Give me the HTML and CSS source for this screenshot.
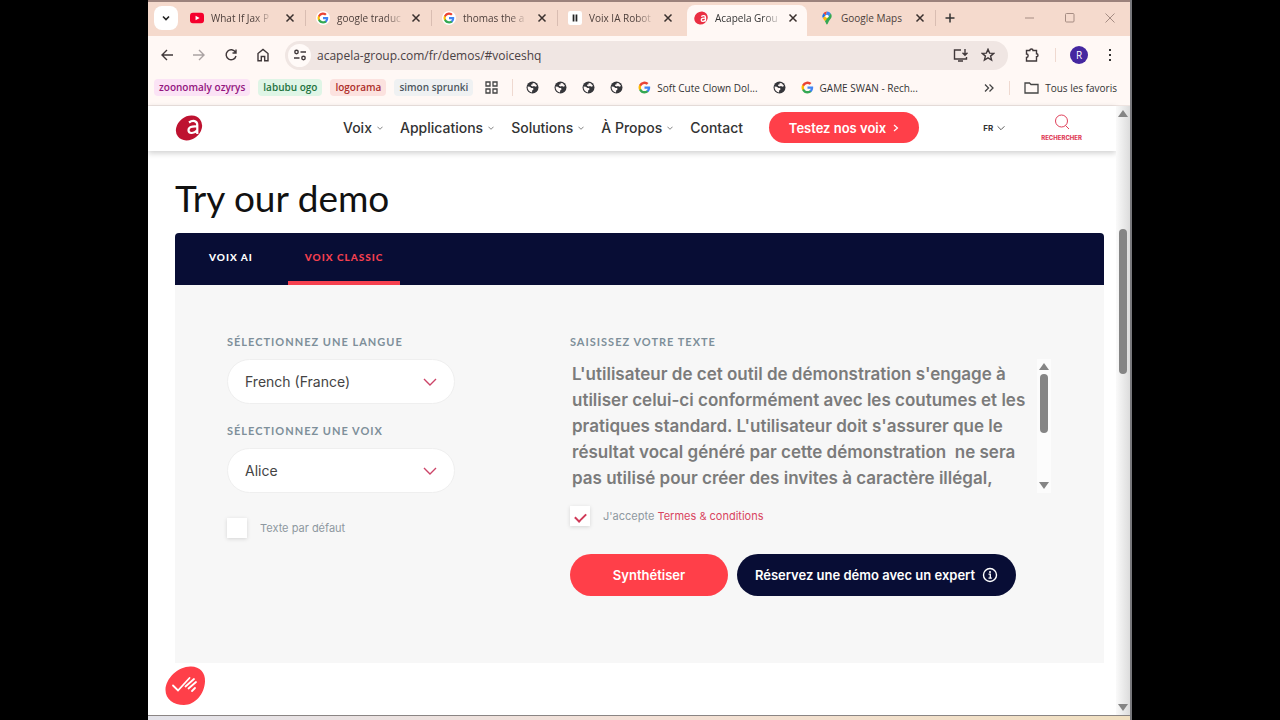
FILE: index.html
```html
<!DOCTYPE html>
<html lang="fr">
<head>
  <meta charset="UTF-8" />
  <meta name="viewport" content="width=device-width, initial-scale=1.0"/>
  <title>Acapela Group - Try our demo</title>
  <link rel="stylesheet" href="styles.css">
</head>
<body>
  <svg class="defs" width="0" height="0" aria-hidden="true">
    <symbol id="google" viewBox="0 0 24 24">
      <path fill="#4285f4" d="M22.5 12.2c0-.8-.1-1.5-.2-2.2H12v4.300h5.900c-.3 1.400-1 2.500-2.200 3.300v2.800h3.600c2.100-1.900 3.200-4.800 3.200-8.200z"/>
      <path fill="#34a853" d="M12 23c3 0 5.500-1 7.300-2.700l-3.600-2.800c-1 .7-2.200 1.100-3.700 1.100-2.900 0-5.300-1.900-6.200-4.500H2.200v2.800C4 20.500 7.700 23 12 23z"/>
      <path fill="#fbbc05" d="M5.800 14.100a6.600 6.600 0 0 1 0-4.200V7.100H2.200a11 11 0 0 0 0 9.800z"/>
      <path fill="#ea4335" d="M12 5.400c1.600 0 3.100.6 4.200 1.600l3.200-3.200A11 11 0 0 0 2.200 7.100l3.600 2.800C6.700 7.300 9.100 5.400 12 5.400z"/>
    </symbol>
    <symbol id="close" viewBox="0 0 10 10">
      <path d="M1.500 1.500l7 7M8.500 1.500l-7 7" fill="none" stroke="currentColor" stroke-width="1.500"/>
    </symbol>
    <symbol id="globe" viewBox="0 0 24 24">
      <circle cx="12" cy="12" r="11" fill="#35363a"/>
      <path fill="#fff8f6" d="M3 10l4 .500 3 2.500h3l1 2-2.500 2.500-.5 3.500C6 20 2.500 16 3 10zM12 3.500l4 .500 4.500 5-3.500 1.500-2-1.500-3 1-3-1.500 1-2 2.500-.5z"/>
    </symbol>
    <symbol id="chevron" viewBox="0 0 14 14">
      <path d="M1 4l6 6 6-6" fill="none" stroke="currentColor" stroke-width="1.400"/>
    </symbol>
  </svg>

  <div class="window">
    <div class="tabstrip">
      <button class="tab-list" aria-label="Rechercher dans les onglets"><svg width="10" height="10" viewBox="0 0 10 10"><path d="M2 3.500l3 3 3-3" fill="none" stroke="#222" stroke-width="1.600"/></svg></button>
      <div class="tab">
        <svg class="favicon" viewBox="0 0 24 24"><rect x="0" y="3" width="24" height="18" rx="5" fill="#f5002d"/><path d="M9.500 8l7 4-7 4z" fill="#fff"/></svg>
        <span class="tab-title fade">What If Jax P</span>
        <button class="tab-close" aria-label="Fermer"><svg><use href="#close"/></svg></button>
      </div>
      <div class="tab">
        <svg class="favicon disc"><use href="#google"/></svg>
        <span class="tab-title fade">google traduc</span>
        <button class="tab-close" aria-label="Fermer"><svg><use href="#close"/></svg></button>
      </div>
      <div class="tab">
        <svg class="favicon disc"><use href="#google"/></svg>
        <span class="tab-title fade">thomas the a</span>
        <button class="tab-close" aria-label="Fermer"><svg><use href="#close"/></svg></button>
      </div>
      <div class="tab before-active">
        <svg class="favicon" viewBox="0 0 24 24"><rect width="24" height="24" rx="4" fill="#fff"/><path d="M8 6h3v12H8zM13 6h3v12h-3z" fill="#222"/></svg>
        <span class="tab-title fade">Voix IA Robot</span>
        <button class="tab-close" aria-label="Fermer"><svg><use href="#close"/></svg></button>
      </div>
      <div class="tab active">
        <svg class="favicon" viewBox="0 0 28 28"><ellipse cx="14" cy="14" rx="14" ry="12.500" transform="rotate(-38 14 14)" fill="#ea2e42"/><path d="M14.500 11c4-3 8.500-2 8.500 2v8M23 14.500c-5-.5-8.500.5-8.500 3.500s5 4 8.500 0" fill="none" stroke="#fff" stroke-width="2.600"/></svg>
        <span class="tab-title fade">Acapela Grou</span>
        <button class="tab-close" aria-label="Fermer"><svg><use href="#close"/></svg></button>
      </div>
      <div class="tab">
        <svg class="favicon" viewBox="0 0 24 24"><path d="M12 1a8 8 0 0 0-6.200 3l4 3.400z" fill="#ea4335"/><path d="M5.800 4A8 8 0 0 0 5 12.500L9.800 7.400z" fill="#1a73e8"/><path d="M12 1a8 8 0 0 1 6.500 3.300L14.400 11 9.800 7.400z" fill="#4285f4"/><path d="M5 12.500c1 2 2.500 3 3.500 5l6-6.800-4.700-3.300z" fill="#fbbc04"/><path d="M18.500 4.300c3.500 5.200.2 9-2.500 12-2 2.300-2.500 6.700-4 6.700s-1.500-2.500-3.500-5.500z" fill="#34a853"/><circle cx="12" cy="9" r="2.700" fill="#fff"/></svg>
        <span class="tab-title">Google Maps</span>
        <button class="tab-close" aria-label="Fermer"><svg><use href="#close"/></svg></button>
      </div>
      <button class="new-tab" aria-label="Nouvel onglet"><svg width="10" height="10" viewBox="0 0 10 10"><path d="M5 .5v9M.5 5h9" stroke="#333" stroke-width="1.500"/></svg></button>
      <div class="window-controls">
        <button aria-label="Réduire"><svg width="10" height="10" viewBox="0 0 10 10"><path d="M0 5h9" stroke="currentColor"/></svg></button>
        <button aria-label="Agrandir"><svg width="10" height="10" viewBox="0 0 10 10"><rect x=".5" y=".5" width="8.500" height="8.500" rx="1" fill="none" stroke="currentColor"/></svg></button>
        <button aria-label="Fermer la fenêtre"><svg width="10" height="10" viewBox="0 0 10 10"><path d="M.5.500l9 9M9.500.500l-9 9" stroke="currentColor"/></svg></button>
      </div>
    </div>

    <div class="toolbar">
      <button aria-label="Retour"><svg viewBox="0 0 14 14"><path d="M7 2L2 7l5 5M2 7h11"/></svg></button>
      <button class="off" aria-label="Avancer"><svg viewBox="0 0 14 14"><path d="M7 2l5 5-5 5M12 7H1"/></svg></button>
      <button aria-label="Actualiser"><svg viewBox="0 0 14 14"><path d="M11.500 4.300A5 5 0 1 0 12 8M12 1.500v3.500H8.500"/></svg></button>
      <button aria-label="Accueil"><svg viewBox="0 0 14 14"><path d="M2 5.500L7 1.500l5 4v7.300H8.700V8.500H5.300v4.300H2z"/></svg></button>
      <div class="omnibox">
        <button class="site-info" aria-label="Informations sur le site"><svg viewBox="0 0 14 14"><path d="M7.500 4H13M1 10h5.500"/><circle cx="3.500" cy="4" r="1.700"/><circle cx="10.500" cy="10" r="1.700"/></svg></button>
        <input type="text" aria-label="Adresse" value="acapela-group.com/fr/demos/#voiceshq">
        <button aria-label="Installer"><svg class="wide" viewBox="0 0 16 14"><path d="M8 2H1.500v9h12V9M5 13h5M12 1v6M9.500 4.800L12 7.200l2.500-2.400"/></svg></button>
        <button aria-label="Ajouter aux favoris"><svg viewBox="0 0 14 14"><path d="M7 1.300l1.600 3.800 4.100.3-3.100 2.700 1 4L7 9.900l-3.600 2.200 1-4L1.300 5.400l4.100-.3z"/></svg></button>
      </div>
      <button class="extensions" aria-label="Extensions"><svg class="wide" viewBox="0 0 16 14"><path d="M2.500 2.500h3.300c0-2 3.200-2 3.200 0h3.500v3.200c2 0 2 3 0 3V13h-10V9.500c2.200 0 2.200-3.500 0-3.500z"/></svg></button>
      <button class="avatar" aria-label="Profil">R</button>
      <button aria-label="Menu"><svg viewBox="0 0 14 14"><path class="dots" d="M6 1h2v2H6zM6 6h2v2H6zM6 11h2v2H6z"/></svg></button>
    </div>

    <div class="bookmarks">
      <a href="#" class="group pink">zoonomaly ozyrys</a>
      <a href="#" class="group green">labubu ogo</a>
      <a href="#" class="group red">logorama</a>
      <a href="#" class="group grey">simon sprunki</a>
      <a href="#" class="apps" aria-label="Applications"><svg width="13" height="13" viewBox="0 0 13 13"><path d="M1 1h4v4H1zM8 1h4v4H8zM1 8h4v4H1zM8 8h4v4H8z" fill="none" stroke="#444" stroke-width="1.300"/></svg></a>
      <div class="sites">
        <a href="#" aria-label="Site 1"><svg class="favicon"><use href="#globe"/></svg></a>
        <a href="#" aria-label="Site 2"><svg class="favicon"><use href="#globe"/></svg></a>
        <a href="#" aria-label="Site 3"><svg class="favicon"><use href="#globe"/></svg></a>
        <a href="#" aria-label="Site 4"><svg class="favicon"><use href="#globe"/></svg></a>
        <a href="#"><svg class="favicon"><use href="#google"/></svg>Soft Cute Clown Dol...</a>
        <a href="#" aria-label="Site 5"><svg class="favicon"><use href="#globe"/></svg></a>
        <a href="#"><svg class="favicon"><use href="#google"/></svg>GAME SWAN - Rech...</a>
      </div>
      <button class="more" aria-label="Plus de favoris"><svg width="10" height="10" viewBox="0 0 10 10"><path d="M1 1.500L4.500 5 1 8.500M5.500 1.500L9 5 5.500 8.500" fill="none" stroke="#444" stroke-width="1.300"/></svg></button>
      <a href="#" class="all"><svg width="15" height="12" viewBox="0 0 15 12"><path d="M1 1h4.500L7 2.500h7V11H1z" fill="none" stroke="#444" stroke-width="1.300"/></svg>Tous les favoris</a>
    </div>

    <div class="viewport">
      <div class="page">
        <header class="site-header">
          <a href="#" class="logo" aria-label="Acapela"><svg width="28" height="28" viewBox="0 0 28 28"><ellipse cx="14" cy="14" rx="14" ry="11.500" transform="rotate(-38 14 14)" fill="#be1230"/><path d="M14 8.500c4-2.800 8.300-1.600 8.300 2.500v9M22.300 12.500c-5.500-.5-8.800.6-8.800 3.700s5 4.300 8.800 0" fill="none" stroke="#fff" stroke-width="2.200"/></svg></a>
          <nav class="nav">
            <a href="#">Voix <svg><use href="#chevron"/></svg></a>
            <a href="#">Applications <svg><use href="#chevron"/></svg></a>
            <a href="#">Solutions <svg><use href="#chevron"/></svg></a>
            <a href="#">À Propos <svg><use href="#chevron"/></svg></a>
            <a href="#">Contact</a>
          </nav>
          <button class="btn btn-test">Testez nos voix <svg width="6" height="8" viewBox="0 0 6 8"><path d="M1 1l3.500 3L1 7" fill="none" stroke="#fff" stroke-width="1.200"/></svg></button>
          <button class="lang">FR <svg width="8" height="8"><use href="#chevron"/></svg></button>
          <a href="#" class="search"><svg width="16" height="16" viewBox="0 0 16 16"><circle cx="7.500" cy="7" r="6" fill="none" stroke="#e0405a"/><path d="M11.500 11.500l3.500 3.500" stroke="#e0405a"/></svg>RECHERCHER</a>
        </header>

        <main>
          <h1>Try our demo</h1>
          <section class="demo">
            <div class="demo-tabs" role="tablist">
              <button role="tab" aria-selected="false">VOIX AI</button>
              <button role="tab" aria-selected="true" class="selected">VOIX CLASSIC</button>
            </div>
            <form class="demo-form">
              <div class="voice">
                <label class="caption" for="language">SÉLECTIONNEZ UNE LANGUE</label>
                <div class="select">
                  <select id="language"><option>French (France)</option></select>
                  <svg><use href="#chevron"/></svg>
                </div>
                <label class="caption" for="voice">SÉLECTIONNEZ UNE VOIX</label>
                <div class="select">
                  <select id="voice"><option>Alice</option></select>
                  <svg><use href="#chevron"/></svg>
                </div>
                <div class="check">
                  <input type="checkbox" id="default-text">
                  <label for="default-text">Texte par défaut</label>
                </div>
              </div>
              <div class="message">
                <label class="caption" for="text">SAISISSEZ VOTRE TEXTE</label>
                <div class="textbox">
                  <textarea id="text" rows="5">L'utilisateur de cet outil de démonstration s'engage à
utiliser celui-ci conformément avec les coutumes et les
pratiques standard. L'utilisateur doit s'assurer que le
résultat vocal généré par cette démonstration  ne sera
pas utilisé pour créer des invites à caractère illégal,</textarea>
                  <div class="scrollbar">
                    <i class="arrow up"></i>
                    <i class="thumb"></i>
                    <i class="arrow down"></i>
                  </div>
                </div>
                <div class="check">
                  <input type="checkbox" id="terms" checked>
                  <label for="terms">J'accepte <a href="#">Termes &amp; conditions</a></label>
                </div>
                <div class="actions">
                  <button type="button" class="btn btn-synth">Synthétiser</button>
                  <button type="button" class="btn btn-expert">Réservez une démo avec un expert <svg width="16" height="16" viewBox="0 0 16 16"><circle cx="8" cy="8" r="6.500" fill="none" stroke="#fff" stroke-width="1.400"/><path d="M6.500 7.200h1.800v3.800M6.500 11.200h3.300" fill="none" stroke="#fff" stroke-width="1.300"/><circle cx="8" cy="4.900" r="1" fill="#fff"/></svg></button>
                </div>
              </div>
            </form>
          </section>
        </main>
      </div>
      <div class="scrollbar page-scroll">
        <i class="arrow up"></i>
        <i class="thumb"></i>
        <i class="arrow down"></i>
      </div>
      <button class="consent" aria-label="Gestion des cookies"><svg width="42" height="42" viewBox="0 0 42 42"><path d="M1.500 25C1.500 13 15 1 27 1.500c9 .3 14.500 6 14 15C40.500 29 31 40 20 40 9.500 40 1.500 34 1.500 25z" fill="#ff3f49"/><path d="M9 20.500l5 5L25.500 13M21.500 21.500l8.500-7.500M24.500 23.500l7.500-6.500M28 26l3-3" fill="none" stroke="#fff" stroke-width="1.800" stroke-linecap="round"/></svg></button>
    </div>
    <div class="desktop-edge"></div>
  </div>
</body>
</html>
```
FILE: styles.css
```css
* {
  box-sizing: border-box;
}
body {
  margin: 0;
  background: #000;
  font-family: Inter, sans-serif;
  color: #333;
}
button, input, select, textarea {
  font: inherit;
  color: inherit;
  border: none;
  margin: 0;
  padding: 0;
  background: none;
}
a {
  color: inherit;
  text-decoration: none;
}
.defs {
  position: absolute;
}
.window {
  display: flex;
  flex-direction: column;
  min-height: 100vh;
  margin: 0 148px;
  background: #fff;
  border-right: 2px solid #77777b;
}

/* browser tabs */
.tabstrip {
  display: flex;
  align-items: center;
  height: 36px;
  padding: 0 0 3px 6px;
  background: #f5dacd;
  border-top: 2px solid #9c827c;
  font-family: "Open Sans", sans-serif;
  font-size: 10px;
}
.tab-list {
  display: flex;
  align-items: center;
  justify-content: center;
  width: 24px;
  height: 24px;
  margin-right: 2px;
  border-radius: 8px;
  background: #fff;
}
.tab {
  display: flex;
  align-items: center;
  flex: 0 1 126px;
  min-width: 0;
  height: 16px;
  padding: 0 10px;
  border-right: 1px solid #d9bdb2;
  color: #4c3e3a;
}
.favicon {
  width: 14px;
  height: 14px;
  flex: none;
}
.disc {
  border-radius: 50%;
  background: #fff;
  padding: 1px;
}
.tab-title {
  margin: 0 auto 0 7px;
  white-space: nowrap;
}
.fade {
  -webkit-mask-image: linear-gradient(to right, #000 75%, rgba(0, 0, 0, 0.2));
  mask-image: linear-gradient(to right, #000 75%, rgba(0, 0, 0, 0.2));
}
.tab-close {
  display: flex;
  color: #3a302e;
}
.tab-close svg {
  width: 10px;
  height: 10px;
}
.before-active {
  border-color: transparent;
}
.tab.active {
  align-self: flex-end;
  flex-basis: 120px;
  height: 31px;
  margin: 0 3px -3px 3px;
  padding: 0 9px 6px 7px;
  border: none;
  border-radius: 8px 8px 0 0;
  background: #fff8f5;
  color: #333;
}
.new-tab {
  display: flex;
  margin-left: 9px;
}
.window-controls {
  display: flex;
  gap: 30px;
  margin-left: auto;
  padding-right: 15px;
  color: #a58c83;
}
.window-controls button {
  display: flex;
}

/* address bar */
.toolbar {
  display: flex;
  align-items: center;
  gap: 18px;
  height: 38px;
  padding: 0 13px 0 12px;
  background: #fff8f5;
  font-family: "Open Sans", sans-serif;
}
.toolbar button {
  display: flex;
}
.toolbar svg {
  width: 14px;
  height: 14px;
  fill: none;
  stroke: #40383a;
  stroke-width: 1.4;
}
.toolbar svg.wide {
  width: 16px;
}
.toolbar .off svg {
  stroke: #aaa2a2;
}
.toolbar svg .dots {
  fill: #333;
  stroke: none;
}
.omnibox {
  display: flex;
  align-items: center;
  flex: 1;
  gap: 12px;
  height: 29px;
  margin: 0 -2px 0 -3px;
  padding: 0 13px 0 3px;
  border-radius: 15px;
  background: #f0e6e3;
  font-size: 12px;
}
.omnibox input {
  flex: 1;
  min-width: 0;
  margin-left: -6px;
  color: #4a4144;
}
.toolbar .site-info {
  align-items: center;
  justify-content: center;
  width: 23px;
  height: 23px;
  border-radius: 50%;
  background: #fffaf8;
}
.toolbar .extensions {
  padding-right: 15px;
  border-right: 1px solid #efd9d0;
}
.toolbar .avatar {
  align-items: center;
  justify-content: center;
  width: 18px;
  height: 18px;
  margin: 0 -3px 0 -4px;
  border-radius: 50%;
  background: #4527a0;
  color: #fff;
  font-size: 10px;
}

/* bookmarks */
.bookmarks {
  display: flex;
  align-items: center;
  height: 32px;
  padding: 0 13px 4px 6px;
  background: #fff8f5;
  border-bottom: 1px solid #eee4e1;
  font-family: "Open Sans", sans-serif;
  font-size: 10px;
  white-space: nowrap;
}
.group {
  margin-right: 8px;
  padding: 0 5px;
  border-radius: 4px;
  font-weight: 600;
  line-height: 17px;
}
.pink {
  background: #fbe3f5;
  color: #93157f;
}
.green {
  background: #dff5e6;
  color: #24733f;
}
.red {
  background: #fce2df;
  color: #ae2f2b;
}
.grey {
  background: #eff1f2;
  color: #4c565e;
}
.apps {
  display: flex;
  padding: 2px 14px 2px 4px;
  border-right: 1px solid #efd9d0;
}
.sites {
  display: flex;
  align-items: center;
  gap: 15px;
  padding-left: 13px;
}
.sites a, .all {
  display: flex;
  align-items: center;
  gap: 6px;
}
.sites .favicon {
  width: 13px;
  height: 13px;
}
.more {
  display: flex;
  margin-left: auto;
  margin-right: 15px;
}
.all {
  padding-left: 14px;
  border-left: 1px solid #efd9d0;
}

/* page */
.viewport {
  position: relative;
  display: flex;
  flex: 1;
}
.page {
  flex: 1;
  min-width: 0;
}
.site-header {
  display: flex;
  align-items: center;
  height: 45px;
  padding: 0 34px 2px 27px;
  box-shadow: 0 2px 6px rgba(0, 0, 0, 0.2);
}
.logo, .nav a, .nav svg, .lang, .search {
  display: flex;
}
.nav {
  display: flex;
  gap: 17px;
  margin-left: 140px;
  font-size: 14px;
  font-weight: 500;
  white-space: nowrap;
}
.nav a {
  align-items: center;
  gap: 5px;
}
.nav svg {
  width: 6px;
  height: 6px;
}
.btn {
  display: flex;
  align-items: center;
  justify-content: center;
  gap: 7px;
  border-radius: 21px;
  background: #ff3f49;
  color: #fff;
  font-size: 13px;
  font-weight: 600;
  white-space: nowrap;
}
.btn-test {
  width: 150px;
  height: 31px;
  margin-left: 26px;
}
.lang {
  align-items: center;
  gap: 4px;
  margin-left: auto;
  font-size: 8px;
  font-weight: 700;
}
.search {
  flex-direction: column;
  align-items: center;
  gap: 4px;
  margin-left: 36px;
  color: #e0405a;
  font-size: 6px;
  font-weight: 800;
}
main {
  padding: 25px 12px 52px 27px;
}
h1 {
  margin: 0 0 13px;
  font-family: Lato, sans-serif;
  font-size: 37px;
  font-weight: 400;
  line-height: 44px;
  color: #111;
}
.demo {
  min-height: 430px;
  border-radius: 4px 4px 0 0;
  background: #f7f7f7;
  overflow: hidden;
}
.demo-tabs {
  display: flex;
  height: 52px;
  padding-left: 17px;
  background: #080d35;
}
.demo-tabs button {
  padding: 0 17px;
  border-bottom: 4px solid transparent;
  font-family: Lato, sans-serif;
  font-size: 10px;
  font-weight: 900;
  letter-spacing: 1px;
  color: #fff;
}
.demo-tabs .selected {
  margin-left: 18px;
  border-color: #f5404f;
  color: #f5404f;
}
.demo-form {
  display: flex;
  gap: 115px;
  padding: 47px 53px 60px 52px;
}
.voice {
  flex: 0 1 228px;
}
.message {
  flex: 1;
  min-width: 0;
}
.caption {
  display: block;
  margin-bottom: 7px;
  font-family: Lato, sans-serif;
  font-size: 11px;
  font-weight: 700;
  line-height: 20px;
  letter-spacing: 1px;
  color: #7e8f9a;
}
.select {
  position: relative;
  margin-bottom: 17px;
}
.select select {
  width: 100%;
  height: 45px;
  padding: 0 17px;
  border: 1px solid #efefef;
  border-radius: 23px;
  background: #fff;
  appearance: none;
  font-size: 14px;
  color: #444;
}
.select svg {
  position: absolute;
  top: 16px;
  right: 18px;
  width: 14px;
  height: 14px;
  color: #cc4468;
  pointer-events: none;
}
.check {
  display: flex;
  align-items: center;
  gap: 13px;
  font-size: 11px;
  color: #8e98a0;
}
.voice .check {
  padding-top: 8px;
}
.check a {
  color: #d94560;
}
.check input {
  display: grid;
  place-items: center;
  width: 20px;
  height: 20px;
  appearance: none;
  background: #fff;
  box-shadow: 0 1px 4px rgba(0, 0, 0, 0.14);
}
.check input:checked::before {
  content: "";
  width: 9px;
  height: 5px;
  border: solid #d03a58;
  border-width: 0 0 2px 2px;
  transform: rotate(-45deg);
}
.textbox {
  display: flex;
  gap: 3px;
  height: 134px;
}
.textbox textarea {
  flex: 1;
  min-width: 0;
  padding: 2px 0 2px 2px;
  overflow: hidden;
  resize: none;
  font-size: 17px;
  font-weight: 600;
  line-height: 26px;
  white-space: pre;
  color: #7b7b7b;
}
.message .check {
  margin: 13px 0 28px;
}
.actions {
  display: flex;
  gap: 9px;
}
.actions .btn {
  height: 42px;
}
.btn-synth {
  width: 158px;
}
.btn.btn-expert {
  width: 279px;
  background: #080d35;
}

/* scrollbars */
.scrollbar {
  display: flex;
  flex-direction: column;
  align-items: center;
  width: 14px;
  padding: 4px 0;
  background: #fcfcfc;
}
.arrow {
  border: 5px solid transparent;
}
.up {
  border-top: none;
  border-bottom: 7px solid #858585;
}
.down {
  margin-top: auto;
  border-bottom: none;
  border-top: 7px solid #858585;
}
.thumb {
  width: 8px;
  height: 59px;
  margin-top: 4px;
  border-radius: 4px;
  background: #858585;
}
.page-scroll {
  background: linear-gradient(to right, #fafafa, #dcdcdc);
}
.page-scroll .thumb {
  height: 145px;
  margin-top: 112px;
}
.consent {
  position: absolute;
  left: 16px;
  bottom: 8px;
}
.consent svg {
  display: block;
}
.desktop-edge {
  height: 5px;
  border-top: 1px solid #8a8584;
  background: linear-gradient(to right, #e3e3ea, #f3e0d6, #f0dfc0);
}
```
